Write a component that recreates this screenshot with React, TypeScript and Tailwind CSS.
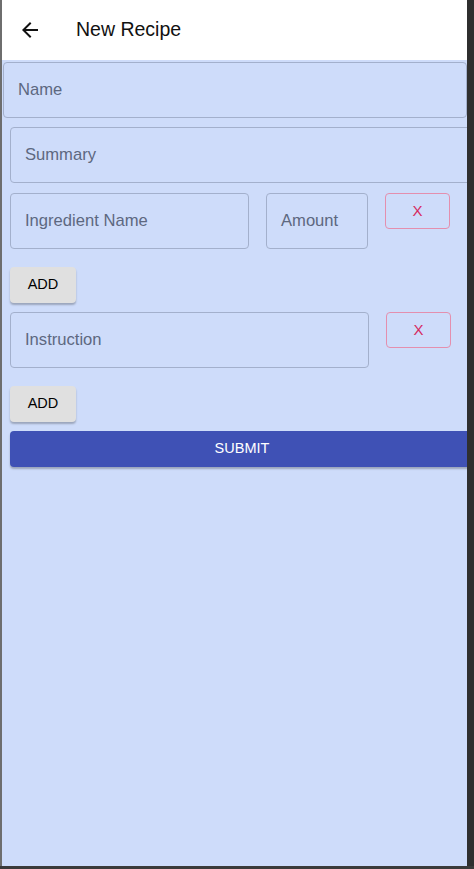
import React from "react";

const font = { fontFamily: '"Liberation Sans", Arial, sans-serif' };

function Field({ label, className = "" }: { label: string; className?: string }) {
  return (
    <div
      className={`h-[56px] shrink-0 rounded-[4px] border border-[#a3b0cc] flex items-center px-[14px] pt-[1px] text-[16.6px] text-[#5d6880] ${className}`}
    >
      {label}
    </div>
  );
}

function RemoveButton() {
  return (
    <button className="h-[36px] w-[65px] shrink-0 rounded-[4px] border border-[#e48fae] text-[15px] text-[#d62a5f] flex items-center justify-center">
      X
    </button>
  );
}

function AddButton() {
  return (
    <button className="h-[36px] w-[66px] rounded-[4px] bg-[#e0e0e0] text-[14.5px] text-black shadow-[0_2px_2px_rgba(0,0,0,0.25)]">
      ADD
    </button>
  );
}

export default function App() {
  return (
    <div className="w-[474px] h-[869px] flex flex-col bg-[#2f2f2f]" style={font}>
      <div className="flex flex-1">
        <div className="w-[2px] bg-[#6e6e6e]" />
        <main className="w-[465px] overflow-hidden bg-[#cedcfa] flex flex-col">
          {/* app bar */}
          <header className="h-[60px] bg-white flex items-center shrink-0">
            <svg className="ml-[16px]" width="24" height="24" viewBox="0 0 24 24" fill="#111">
              <path d="M20 11H7.83l5.59-5.59L12 4l-8 8 8 8 1.41-1.41L7.83 13H20v-2z" />
            </svg>
            <h1 className="ml-[34px] text-[19.5px] text-[#111]">New Recipe</h1>
          </header>

          <div className="pt-[2px] pl-[1px]">
            <Field label="Name" className="w-[464px] border-[#97a3c0]" />
          </div>

          <div className="pl-[8px] flex flex-col">
            <Field label="Summary" className="mt-[9px] w-[464px]" />

            <div className="mt-[10px] flex items-start">
              <Field label="Ingredient Name" className="w-[239px]" />
              <Field label="Amount" className="ml-[17px] w-[102px]" />
              <div className="ml-[17px]">
                <RemoveButton />
              </div>
            </div>

            <div className="mt-[18px]">
              <AddButton />
            </div>

            <div className="mt-[9px] flex items-start">
              <Field label="Instruction" className="w-[359px]" />
              <div className="ml-[17px]">
                <RemoveButton />
              </div>
            </div>

            <div className="mt-[18px]">
              <AddButton />
            </div>

            <button className="mt-[9px] h-[36px] w-[464px] rounded-[4px] bg-[#3f51b5] text-white text-[14.5px] shadow-[0_2px_2px_rgba(0,0,0,0.25)]">
              SUBMIT
            </button>
          </div>
        </main>
        <div className="flex-1 bg-[#2f2f2f]" />
      </div>
      <div className="h-[3px] bg-[#3a3a3a]" />
    </div>
  );
}
